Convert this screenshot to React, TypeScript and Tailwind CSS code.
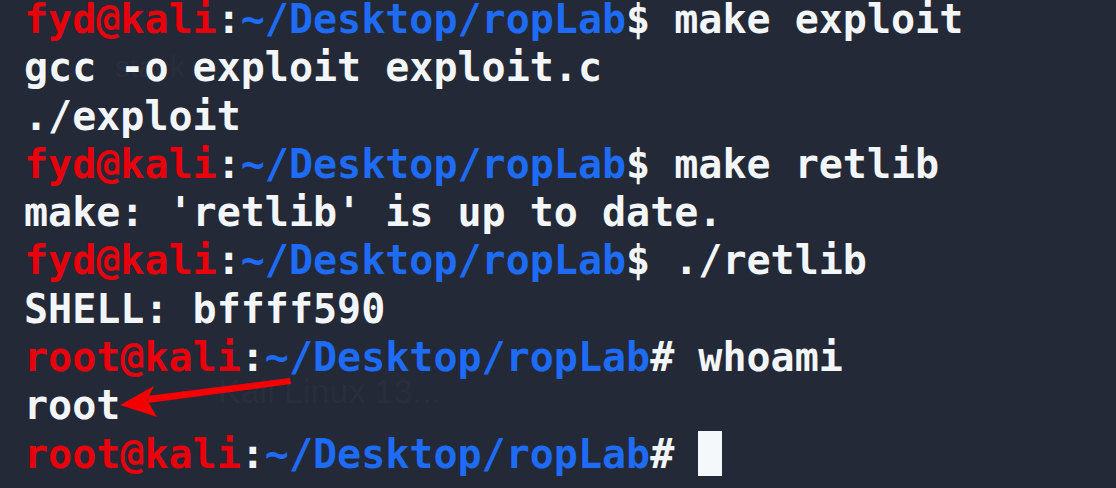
export default function App() {
  const user = (name: string, sym: string, cmd?: string) => (
    <div className="whitespace-pre">
      <span className="text-[#e8000c]">{name}@kali</span>
      <span className="text-[#f3f6f8]">:</span>
      <span className="text-[#1e6bf5]">~/Desktop/ropLab</span>
      <span className="text-[#f3f6f8]">{sym}</span>
      {cmd ? <span className="text-[#f3f6f8]"> {cmd}</span> : null}
    </div>
  );

  const out = (text: string) => (
    <div className="whitespace-pre text-[#f3f6f8]">{text}</div>
  );

  return (
    <div className="relative h-[488px] w-[1116px] overflow-hidden bg-[#232937]">
      {/* faint watermark */}
      <div className="absolute left-[115px] top-[44px] font-['Liberation_Sans',sans-serif] text-[30px] text-[#282e3b]">
        stack
      </div>
      <div className="absolute left-[218px] top-[366px] font-['Liberation_Sans',sans-serif] text-[34px] text-[#282e3b]">
        Kali Linux 13...
      </div>

      <div className="relative -mt-[5px] pl-[24px] font-['DejaVu_Sans_Mono',monospace] text-[40px] font-bold leading-[48.3px]">
        {user("fyd", "$", "make exploit")}
        {out("gcc -o exploit exploit.c")}
        {out("./exploit")}
        {user("fyd", "$", "make retlib")}
        {out("make: 'retlib' is up to date.")}
        {user("fyd", "$", "./retlib")}
        {out("SHELL: bffff590")}
        {user("root", "#", "whoami")}
        {out("root")}
        <div className="flex items-center whitespace-pre">
          {user("root", "#")}
          <span className="ml-[24px] inline-block h-[45px] w-[24px] bg-[#f4f8fb]" />
        </div>
      </div>

      <svg className="absolute left-0 top-0" width="1116" height="488">
        <polygon points="290,378 291,384 148,403 147,396" fill="#f40000" />
        <polygon points="120,405 154,386 147,400 157,417" fill="#f40000" />
      </svg>
    </div>
  );
}
